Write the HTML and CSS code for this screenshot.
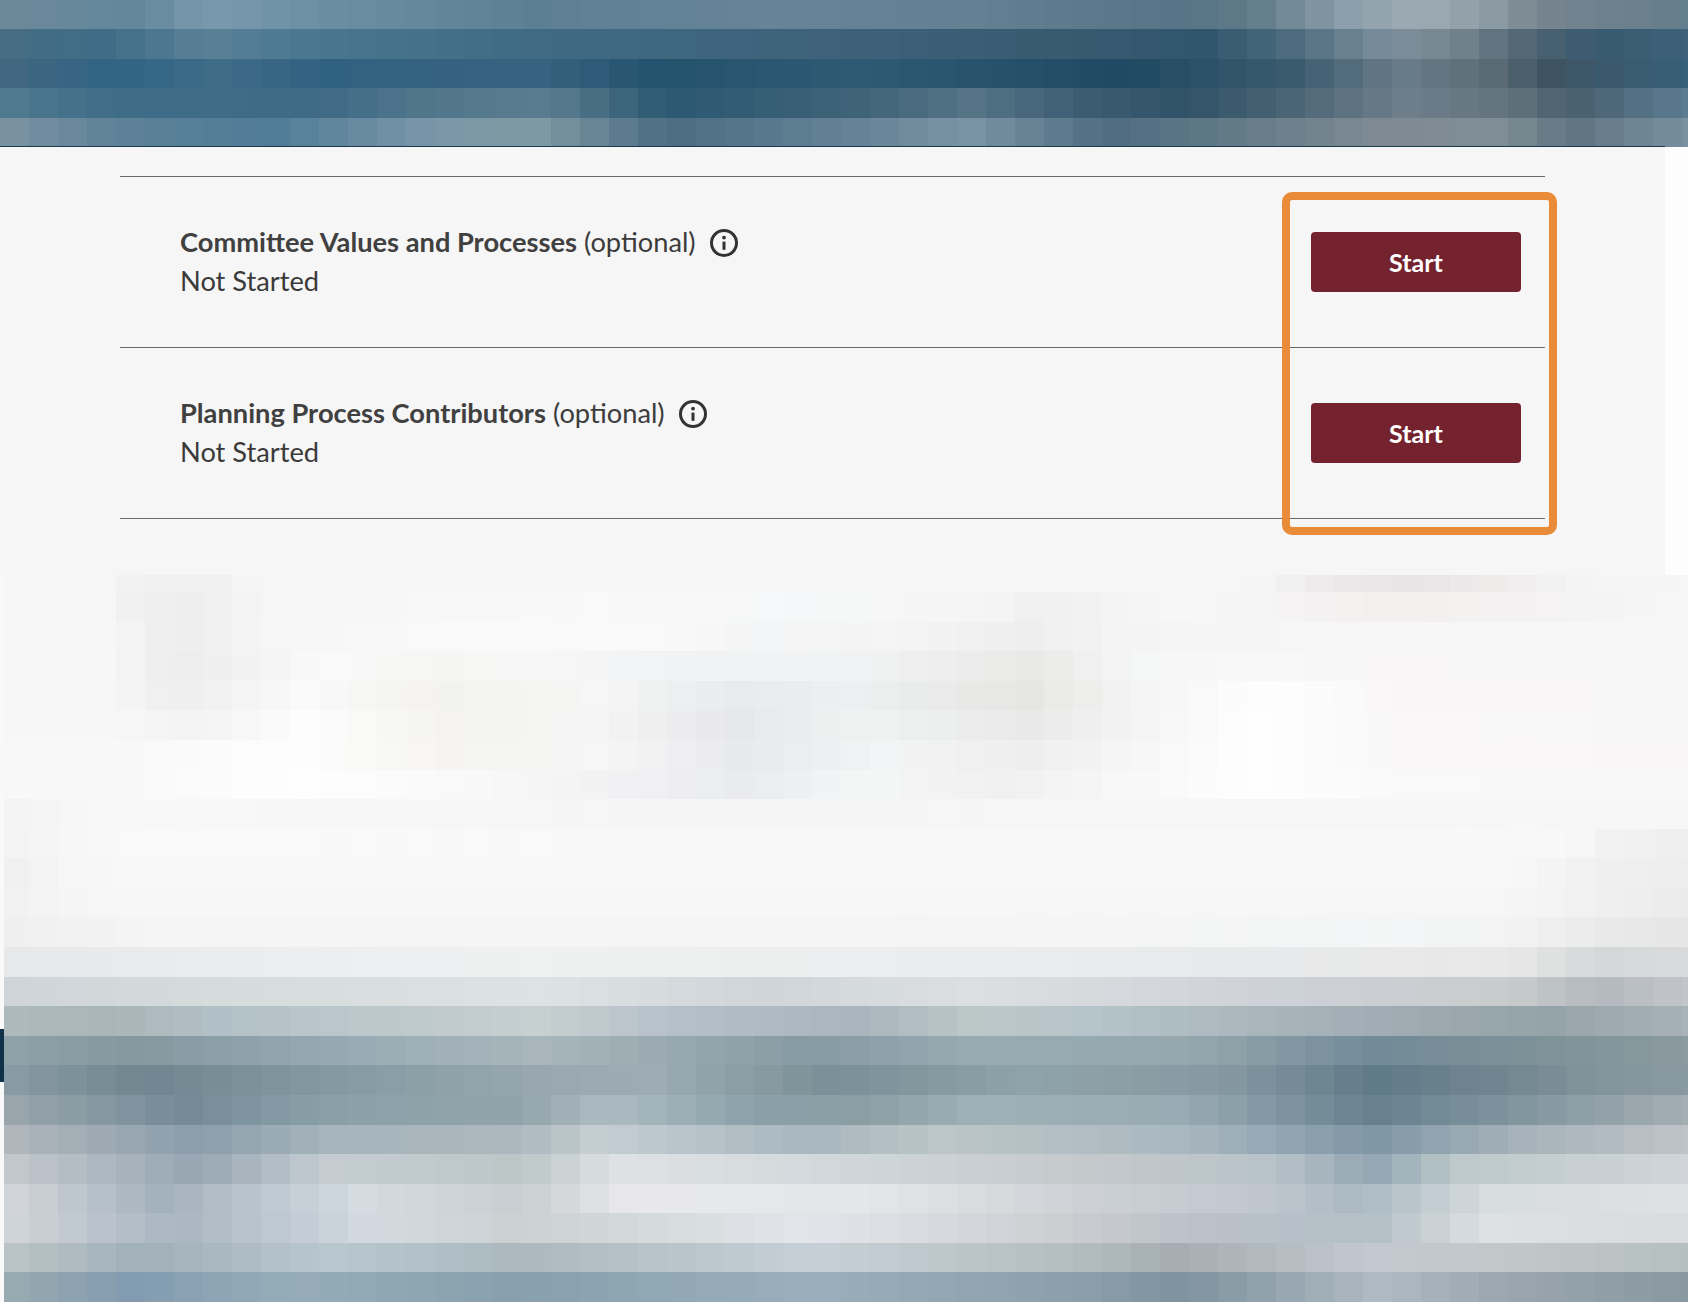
FILE: index.html
```html
<!DOCTYPE html>
<html lang="en">
<head>
<meta charset="utf-8">
<title>Plan sections</title>
<link rel="stylesheet" href="styles.css">
</head>
<body>
<svg class="defs" aria-hidden="true">
  <filter id="blocks" filterUnits="userSpaceOnUse" primitiveUnits="userSpaceOnUse" x="0" y="0" width="1740" height="800" color-interpolation-filters="sRGB">
    <feFlood x="14" y="0" width="1" height="800" flood-color="#000"/>
    <feComposite x="0" y="0" width="29" height="800" result="tile"/>
    <feTile in="tile" x="0" y="0" width="1740" height="800" result="lines"/>
    <feComposite in="SourceGraphic" in2="lines" operator="in" x="0" y="0" width="1740" height="800"/>
    <feMorphology operator="dilate" radius="14 0" x="0" y="0" width="1740" height="800"/>
  </filter>
  <filter id="blocks-inset" filterUnits="userSpaceOnUse" primitiveUnits="userSpaceOnUse" x="0" y="0" width="1740" height="800" color-interpolation-filters="sRGB">
    <feFlood x="10" y="0" width="1" height="800" flood-color="#000"/>
    <feComposite x="0" y="0" width="29" height="800" result="tile"/>
    <feTile in="tile" x="0" y="0" width="1740" height="800" result="lines"/>
    <feComposite in="SourceGraphic" in2="lines" operator="in" x="0" y="0" width="1740" height="800"/>
    <feMorphology operator="dilate" radius="14 0" x="0" y="0" width="1740" height="800"/>
  </filter>
</svg>
<header class="banner">
  <div class="bands">
    <div class="band h1"></div>
    <div class="band h2"></div>
    <div class="band h3"></div>
    <div class="band h4"></div>
    <div class="band h5"></div>
  </div>
</header>
<section class="panel">
  <main class="panel-main">
    <div class="task-list">
      <article class="task">
        <div class="task-text">
          <p class="task-title"><strong>Committee Values and Processes</strong> (optional)<svg class="info" viewBox="0 0 28 28" aria-hidden="true"><circle cx="14" cy="14" r="12.5"/><circle class="dot" cx="14" cy="8.6" r="1.9"/><path d="M14 12.6V20.8"/></svg></p>
          <p class="task-status">Not Started</p>
        </div>
        <button class="start" type="button">Start</button>
      </article>
      <article class="task">
        <div class="task-text">
          <p class="task-title"><strong>Planning Process Contributors</strong> (optional)<svg class="info" viewBox="0 0 28 28" aria-hidden="true"><circle cx="14" cy="14" r="12.5"/><circle class="dot" cx="14" cy="8.6" r="1.9"/><path d="M14 12.6V20.8"/></svg></p>
          <p class="task-status">Not Started</p>
        </div>
        <button class="start" type="button">Start</button>
      </article>
      <div class="callout"></div>
    </div>
  </main>
  <div class="panel-edge"></div>
</section>
<section class="lower">
  <div class="rail"><div class="rail-mark"></div></div>
  <div class="mosaic">
    <div class="m m0"></div><div class="m m1"></div><div class="m m2"></div><div class="m m3"></div><div class="m m4"></div>
    <div class="m m5"></div><div class="m m6"></div><div class="m m7"></div><div class="m m8"></div><div class="m m9"></div>
    <div class="m m10"></div><div class="m m11"></div><div class="m m12"></div><div class="m m13"></div><div class="m m14"></div>
    <div class="m m15"></div><div class="m m16"></div><div class="m m17"></div><div class="m m18"></div><div class="m m19"></div>
    <div class="m m20"></div><div class="m m21"></div><div class="m m22"></div><div class="m m23"></div><div class="m m24"></div>
  </div>
</section>
</body>
</html>
```
FILE: styles.css
```css
* { box-sizing: border-box; }
html, body { margin: 0; padding: 0; }
body { width: 1688px; height: 1302px; overflow: hidden; background: #f6f6f6; font-family: "Lato", "Liberation Sans", sans-serif; color: #3c3c3c; }
.defs { position: absolute; width: 0; height: 0; }

.banner { position: relative; height: 147px; overflow: hidden; }
.banner::after { content: ""; position: absolute; left: 0; bottom: 0; width: 1665px; height: 1px; background: #1b3c50; }
.bands { width: 1730px; height: 147px; display: flex; flex-direction: column; filter: url(#blocks); }
.band { flex: 1; }
.h1 { background: linear-gradient(90deg, #6d8998 0, #62879d 140px, #7a99ae 205px, #6a8fa4 323px, #5d7f95 538px, #668498 754px, #648093 969px, #567485 1184px, #5f7a88 1249px, #8c9fac 1346px, #9eabb3 1421px, #8e9ea6 1486px, #76848e 1539px, #647e8d 1688px); }
.h2 { background: linear-gradient(90deg, #456c82 0, #3f6d87 108px, #5a8097 205px, #4a7891 301px, #406a84 538px, #3d6179 861px, #375a70 1077px, #2f566d 1206px, #4d6c7e 1292px, #7b8f9c 1389px, #76868f 1453px, #506472 1529px, #385a70 1593px, #3e6279 1688px); }
.h3 { background: linear-gradient(90deg, #43687f 0, #2f6385 118px, #3f6c87 215px, #316181 323px, #386380 538px, #23526d 657px, #2f5a74 861px, #1f4962 1130px, #3a5b6e 1292px, #697c8a 1400px, #5d6d77 1486px, #3e5463 1550px, #37607a 1688px); }
.h4 { background: linear-gradient(90deg, #507b90 0, #3f6d88 108px, #3f6a86 323px, #51778c 431px, #5a7c90 549px, #2b5871 667px, #3f6379 861px, #557485 969px, #3d5d75 1077px, #305267 1184px, #4b6575 1292px, #6e7e8b 1400px, #64747e 1507px, #485f6e 1572px, #5c7c92 1688px); }
.h5 { background: linear-gradient(90deg, #7d94a3 0, #5f8298 108px, #4f7b96 269px, #7a96a9 431px, #7f99a2 538px, #4a6c83 667px, #668497 861px, #7a94a4 969px, #4f6c80 1109px, #637b87 1238px, #7e8a94 1378px, #7f8e94 1507px, #5f7381 1572px, #7992a0 1688px); }

.panel { display: flex; height: 428px; }
.panel-main { width: 1665px; background: #f6f6f6; padding: 29px 0 0 120px; }
.panel-edge { flex: 1; background: #fdfdfd; }
.task-list { position: relative; width: 1425px; border-bottom: 1px solid #6a6a6a; }
.task { display: flex; justify-content: space-between; align-items: flex-start; height: 171px; padding: 55px 24px 0 60px; border-top: 1px solid #6a6a6a; }
.task-text { margin-top: -10px; }
.task-title, .task-status { margin: 0; font-size: 27.25px; line-height: 39px; }
.task-title strong { font-weight: 700; color: #404040; }
.task-title { white-space: nowrap; }
.task-status { color: #3a3a3a; }
.info { display: inline-block; vertical-align: -5px; width: 28px; height: 28px; margin-left: 14px; fill: none; stroke: #333; stroke-width: 3; }
.info .dot { fill: #333; stroke: none; }
.start { width: 210px; height: 60px; border: 0; border-radius: 4px; background: #75222f; color: #fff; font: 700 25px "Lato", sans-serif; }
.callout { position: absolute; left: 1162px; top: 16px; width: 275px; height: 343px; border: 8px solid #e98b38; border-radius: 10px; }

.lower { display: flex; height: 727px; overflow: hidden; }
.rail { flex: none; width: 4px; background: #f9f9f9; }
.rail-mark { width: 4px; height: 53px; margin-top: 454px; background: #0f3248; }
.mosaic { flex: none; width: 1730px; display: grid; grid-template-rows: 17px repeat(24, 1fr); filter: url(#blocks-inset); }
.m0 { background: linear-gradient(90deg, #f6f6f6 110px, #f1f1f1 130px, #f1f1f1 225px, #f6f6f6 245px, #f6f6f6 1250px, #ebe8e8 1330px, #e9e5e6 1420px, #efecec 1500px, #f5f4f4 1570px, #f6f6f6 1684px); }
.m1 { background: linear-gradient(90deg, #f6f6f6 100px, #f1f1f1 118px, #eeeeee 183px, #f2f2f2 231px, #f6f6f6 269px, #f9f9f9 581px, #f6f7f8 797px, #f5f5f5 990px, #f0f0f0 1023px, #f2f2f2 1077px, #f7f7f7 1184px, #f3efef 1378px, #f4f2f2 1539px, #f7f7f7 1684px); }
.m2 { background: linear-gradient(90deg, #f7f7f7 100px, #ededed 172px, #f6f6f6 269px, #fafafa 484px, #f9f9f9 667px, #f4f5f6 754px, #f4f4f4 904px, #eeeeee 1023px, #f4f4f4 1109px, #f7f6f6 1292px, #f7f7f7 1684px); }
.m3 { background: linear-gradient(90deg, #f7f7f7 100px, #ececec 172px, #f5f5f5 269px, #fafafa 323px, #f5f5f3 431px, #f7f7f7 538px, #f0f2f4 667px, #f1f2f3 861px, #e9e9e7 1023px, #f5f6f6 1130px, #f8f8f8 1238px, #f8f6f6 1400px, #f7f7f7 1684px); }
.m4 { background: linear-gradient(90deg, #f7f7f7 100px, #eeeeee 172px, #fafafa 301px, #f3f2ef 431px, #f5f6f5 592px, #e8eaec 732px, #edf0f1 840px, #e6e6e3 1023px, #f3f4f3 1130px, #fdfdfd 1249px, #fcfcfc 1314px, #f9f6f7 1400px, #f7f6f6 1684px); }
.m5 { background: linear-gradient(90deg, #f7f7f7 100px, #f3f3f3 194px, #fdfdfd 301px, #f4f3f0 452px, #f5f5f5 592px, #e6e7e9 732px, #f0f2f2 861px, #e9e9e9 1023px, #f4f4f4 1130px, #fefefe 1249px, #f9f7f7 1400px, #f8f7f7 1684px); }
.m6 { background: linear-gradient(90deg, #f8f8f8 108px, #fdfdfd 291px, #f5f4f1 452px, #f6f6f6 592px, #e8e9ec 743px, #f3f4f5 883px, #eeeeee 1023px, #f6f6f6 1130px, #fefefe 1249px, #f9f7f8 1400px, #f8f6f6 1684px); }
.m7 { background: linear-gradient(90deg, #f8f8f8 108px, #fefefe 291px, #f8f8f8 484px, #eaebee 743px, #f5f6f6 861px, #f0f0f0 1001px, #f7f7f7 1109px, #fefefe 1249px, #f9f9f9 1400px, #f8f8f8 1684px); }
.m8 { background: linear-gradient(90deg, #f3f3f3 0, #f8f8f8 108px, #f5f5f6 743px, #f6f6f6 1001px, #f7f7f7 1684px); }
.m9 { background: linear-gradient(90deg, #f2f2f2 0, #f9f9f9 108px, #f8f8f8 1561px, #f1f1f1 1615px, #efefef 1684px); }
.m10 { background: linear-gradient(90deg, #efefef 0, #f6f6f6 65px, #f8f8f8 129px, #f8f8f8 1507px, #f0f0f0 1593px, #ededed 1684px); }
.m11 { background: linear-gradient(90deg, #f1f1f1 0, #f5f5f5 65px, #f7f7f7 108px, #f6f6f6 1507px, #efefef 1615px, #ebebeb 1684px); }
.m12 { background: linear-gradient(90deg, #efefef 0, #f5f5f5 151px, #f5f5f5 1077px, #f3f5f6 1400px, #f3f3f3 1507px, #e8e8e8 1615px, #e6e6e6 1684px); }
.m13 { background: linear-gradient(90deg, #e6e8e9 0, #eceef0 323px, #eff0f0 538px, #ecedee 861px, #e8e9ea 1292px, #e8e8e8 1507px, #d4d8d9 1593px, #d9dadb 1684px); }
.m14 { background: linear-gradient(90deg, #ced4d8 0, #d5dcdc 215px, #dde2e3 538px, #d0d5da 754px, #dbdfe0 969px, #cdd1d8 1292px, #c8cccc 1507px, #b4b9bf 1593px, #c2c6cb 1684px); }
.m15 { background: linear-gradient(90deg, #afbabb 0, #a9b5b8 108px, #b2c1c7 215px, #c7cfd1 538px, #b7c2ca 646px, #a8b5bc 861px, #bcc7c8 969px, #b6c5ca 1077px, #a2afb6 1346px, #94a3a8 1539px, #a8b3b8 1684px); }
.m16 { background: linear-gradient(90deg, #8fa1a9 0, #85979f 129px, #96a9b3 323px, #a9b7bb 538px, #869aa3 807px, #98abb3 969px, #96a8ae 1184px, #728a99 1367px, #7e9297 1539px, #8b9ba0 1684px); }
.m17 { background: linear-gradient(90deg, #8a9ca5 0, #6f8690 140px, #839aa3 323px, #98a8ae 538px, #9dadb3 646px, #7a8f97 829px, #8fa3aa 1023px, #879aa3 1216px, #617a89 1367px, #738791 1507px, #82949b 1593px, #8a9aa1 1684px); }
.m18 { background: linear-gradient(90deg, #9aa7ad 0, #748a97 183px, #8aa0a9 323px, #92a4aa 517px, #adbcc2 603px, #8aa0a9 754px, #8a9ea3 861px, #9fb0b6 969px, #98aab3 1184px, #67808f 1367px, #7f949e 1507px, #a4aeb3 1684px); }
.m19 { background: linear-gradient(90deg, #b2b8bc 0, #8a9dab 194px, #a6b5bc 323px, #abb8bd 517px, #c5ced3 592px, #a7b7be 807px, #bcc6c8 937px, #a8b7bf 1184px, #7f96a5 1367px, #a4b2b9 1507px, #bec3c8 1684px); }
.m20 { background: linear-gradient(90deg, #c5c9ce 0, #96a6b2 194px, #c5cdd3 323px, #bcc6c7 517px, #dfe2e4 614px, #cfd6d9 861px, #c4c9cc 1077px, #b8c3c9 1270px, #92a5b2 1367px, #bcc9ca 1453px, #d1d5d9 1684px); }
.m21 { background: linear-gradient(90deg, #d4d7da 0, #a3b1bc 161px, #d5dce2 355px, #c8ced0 517px, #e8e8ea 624px, #e3e7e8 861px, #cdd1d5 1077px, #bfc6ce 1270px, #a9b9c1 1356px, #d7dcdf 1486px, #dfe1e3 1684px); }
.m22 { background: linear-gradient(90deg, #d2d6da 0, #a8b5c0 172px, #d3dae0 366px, #cbd0d2 517px, #e2e6ea 807px, #c9cdd0 1077px, #bcc1ca 1184px, #b3bfc6 1367px, #dde1e3 1486px, #d9dbdd 1684px); }
.m23 { background: linear-gradient(90deg, #bcc5c9 0, #a0b0b8 140px, #b9c7cf 323px, #abb9bf 517px, #c6d0d6 807px, #b3bdc1 1077px, #a5adb2 1173px, #c2c9d0 1367px, #c2c7c9 1507px, #b5bfc0 1684px); }
.m24 { background: linear-gradient(90deg, #9aabb1 0, #829bb0 129px, #96adb9 291px, #87a0ad 517px, #9bafbc 807px, #8b9ea9 1077px, #7f939e 1184px, #afbbc4 1378px, #9aa6ae 1507px, #88999f 1684px); }
```
